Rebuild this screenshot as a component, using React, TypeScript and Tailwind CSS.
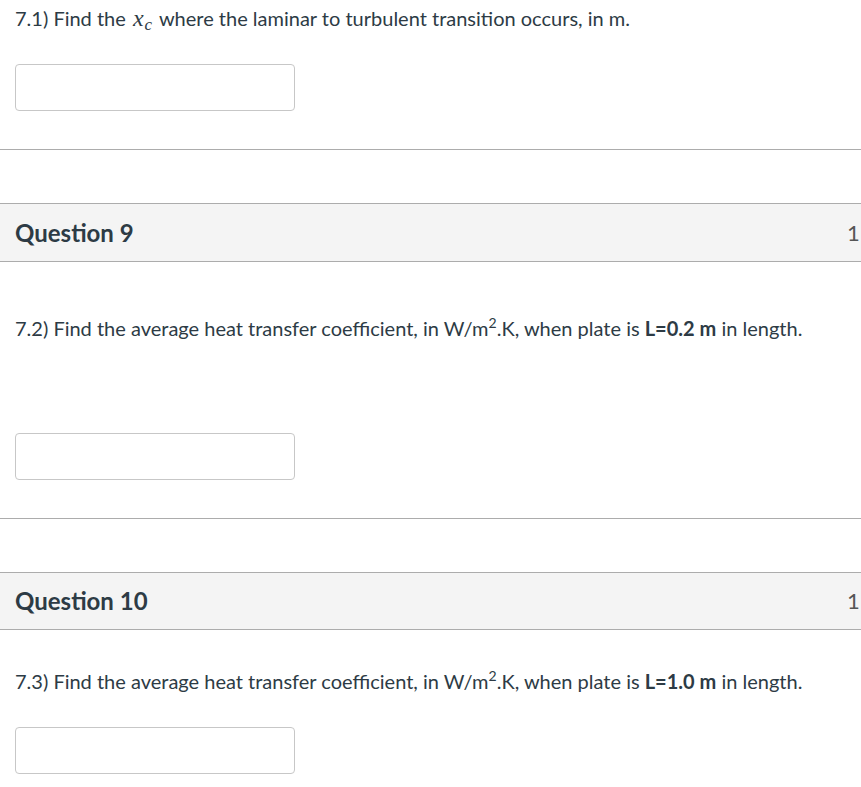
const font = { fontFamily: 'Lato, "Noto Sans", sans-serif' };

function AnswerBox({ top }: { top: string }) {
  return (
    <div className={`${top} ml-[15px] h-[47px] w-[280px] rounded-[4px] border border-[#c7c7c7] bg-white`} />
  );
}

function Divider({ top }: { top: string }) {
  return <div className={`${top} h-px w-full bg-[#acacac]`} />;
}

function Header({ top, height, title }: { top: string; height: string; title: string }) {
  return (
    <div className={`${top} ${height} flex w-[900px] items-center justify-between border-y border-[#acacac] bg-[#f4f4f4] pl-[15px] pr-[5px]`}>
      <h2 className="text-[24px] font-bold leading-[28px] text-[#2d3b45]">{title}</h2>
      <span className="text-[22px] text-[#555]">1 pts</span>
    </div>
  );
}

export default function App() {
  return (
    <div className="min-h-[787px] w-full overflow-hidden bg-white text-[20px] leading-[24px] text-[#2d3b45]" style={font}>
      <p className="mt-[6px] pl-[15px]">
        7.1) Find the{' '}
        <span className="mx-[2px] text-[24px] leading-none italic" style={{ fontFamily: '"Liberation Serif", serif' }}>
          x<sub className="relative top-[4px] ml-[1px] align-baseline text-[17px] leading-none">c</sub>
        </span>{' '}
        where the laminar to turbulent transition occurs, in m.
      </p>
      <AnswerBox top="mt-[34px]" />
      <Divider top="mt-[38px]" />

      <Header top="mt-[53px]" height="h-[59px]" title="Question 9" />
      <p className="mt-[54px] pl-[15px]">
        7.2) Find the average heat transfer coefficient, in W/m
        <sup className="relative top-[-8px] align-baseline text-[14px] leading-none">2</sup>.K, when plate is{' '}
        <strong>L=0.2 m</strong> in length.
      </p>
      <AnswerBox top="mt-[93px]" />
      <Divider top="mt-[38px]" />

      <Header top="mt-[53px]" height="h-[58px]" title="Question 10" />
      <p className="mt-[39px] pl-[15px]">
        7.3) Find the average heat transfer coefficient, in W/m
        <sup className="relative top-[-8px] align-baseline text-[14px] leading-none">2</sup>.K, when plate is{' '}
        <strong>L=1.0 m</strong> in length.
      </p>
      <AnswerBox top="mt-[34px]" />
    </div>
  );
}
